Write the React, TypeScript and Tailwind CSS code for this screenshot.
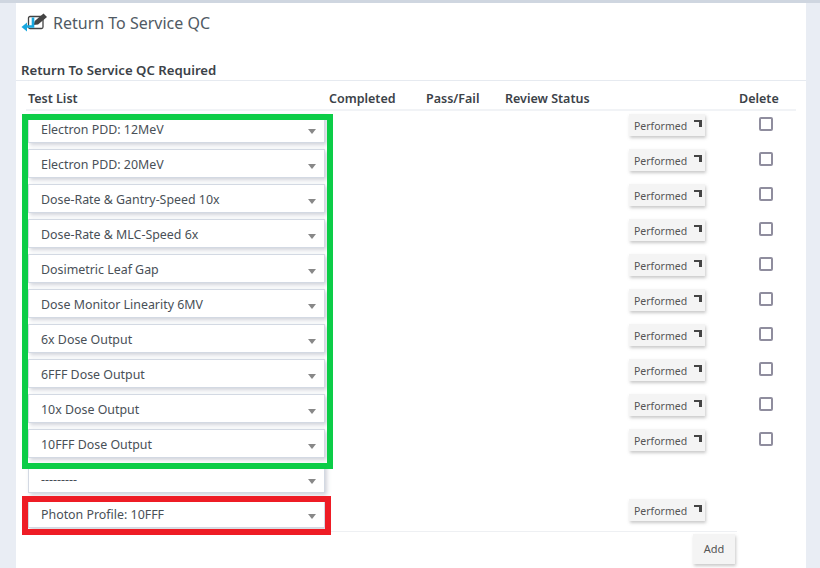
const rows = [
  "Electron PDD: 12MeV",
  "Electron PDD: 20MeV",
  "Dose-Rate & Gantry-Speed 10x",
  "Dose-Rate & MLC-Speed 6x",
  "Dosimetric Leaf Gap",
  "Dose Monitor Linearity 6MV",
  "6x Dose Output",
  "6FFF Dose Output",
  "10x Dose Output",
  "10FFF Dose Output",
];

function Select({ label }: { label: string }) {
  return (
    <div className="flex h-[29px] w-[297px] items-center justify-between border border-[#d3d9e3] bg-white pl-[12px] pr-[8px] text-[12.4px] text-[#495057] shadow-[2px_2px_4px_rgba(120,130,150,0.35)]">
      <span className="pt-[3px]">{label}</span>
      <span className="mt-[5px] h-0 w-0 border-x-[4px] border-t-[5px] border-x-transparent border-t-[#888]" />
    </div>
  );
}

function Performed() {
  return (
    <div className="relative flex h-[22px] w-[76px] items-center bg-[#f4f4f4] pl-[5px] pt-[4px] text-[10.5px] text-[#555] shadow-[1px_2px_3px_rgba(100,100,100,0.35)]">
      Performed
      <span className="absolute right-[3px] top-[6px] h-[7px] w-[8px] border-r-[3px] border-t-2 border-[#444]" />
    </div>
  );
}

function Row({ label, check, perf = true }: { label: string; check: boolean; perf?: boolean }) {
  return (
    <div className="flex h-[35px] items-start pl-[12px]">
      <Select label={label} />
      <div className="ml-[304px] w-[76px]">{perf && <Performed />}</div>
      <div className="ml-[54px] pt-[3px]">
        {check && <div className="h-[14px] w-[14px] rounded-[2px] border-2 border-[#8f8d9e] bg-white" />}
      </div>
    </div>
  );
}

export default function App() {
  return (
    <div className="h-[568px] w-[820px] overflow-hidden bg-[#e9edf4] font-['Noto_Sans','Open_Sans',sans-serif]">
      <div className="h-[3px] w-full bg-[#cfd6e0]" />
      <div className="relative ml-[16px] h-[565px] w-[790px] bg-white">
        <div className="flex h-[40px] items-center pl-[5px]">
          <svg width="28" height="24" viewBox="0 0 28 24" className="mr-[4px]">
            <rect x="7.5" y="5.5" width="14.5" height="12" rx="1.5" fill="none" stroke="#444" strokeWidth="1.3" />
            <path d="M12.5 14l1.2-4 8.8-7.5 3.5 3.5-9 7.5z" fill="#444" />
            <path d="M12 6.5v9H5" fill="none" stroke="#18a8e0" strokeWidth="2.6" />
            <path d="M0.5 16l5.5-4.5v9z" fill="#18a8e0" />
          </svg>
          <span className="text-[16px] text-[#505a64]">Return To Service QC</span>
        </div>
        <div className="flex h-[38px] items-end border-b border-[#e6eaf0] pb-[1px] pl-[5px] text-[13.2px] font-semibold leading-[18px] text-[#3c4248]">
          Return To Service QC Required
        </div>
        <div className="mx-[10px] grid h-[30px] grid-cols-[301px_97px_79px_234px_auto] items-center border-b-2 border-[#f1f3f6] pl-[2px] pt-[8px] text-[12.5px] font-semibold text-[#3c4248]">
          <span>Test List</span>
          <span>Completed</span>
          <span>Pass/Fail</span>
          <span>Review Status</span>
          <span>Delete</span>
        </div>
        <div className="h-[3px]" />
        {rows.map((r) => (
          <Row key={r} label={r} check />
        ))}
        <Row label="---------" check={false} perf={false} />
        <Row label="Photon Profile: 10FFF" check={false} />
        <div className="ml-[12px] mr-[69px] -mt-[3px] flex justify-end border-t border-[#eef0f3] pr-[2px] pt-[2px]">
          <div className="flex h-[30px] w-[42px] items-center justify-center bg-[#f4f4f4] text-[11px] text-[#555] shadow-[1px_2px_3px_rgba(100,100,100,0.35)]">
            Add
          </div>
        </div>
        <div className="pointer-events-none absolute left-[6px] top-[111px] h-[355px] w-[311px] border-[6px] border-[#0ccd47]" />
        <div className="pointer-events-none absolute left-[6px] top-[493px] h-[39px] w-[309px] border-[6px] border-[#ee1c25]" />
      </div>
    </div>
  );
}
